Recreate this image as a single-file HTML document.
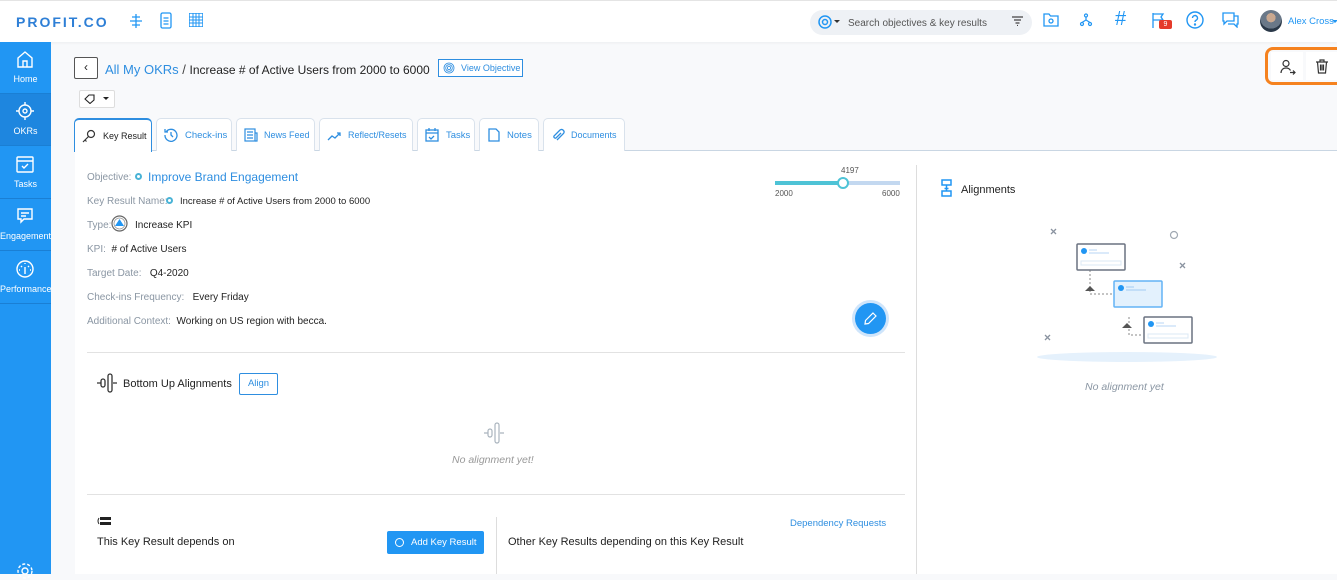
<!DOCTYPE html>
<html><head><meta charset="utf-8"><style>
*{box-sizing:border-box;margin:0;padding:0}
body{width:1337px;height:574px;overflow:hidden;background:#f8f9fb;font-family:"Liberation Sans",sans-serif;font-size:12px;color:#222;position:relative}
.a{position:absolute}
.hdr{left:0;top:0;width:1337px;height:42px;background:#fff;border-top:1px solid #e4e4e4;box-shadow:0 1px 3px rgba(0,0,0,.05)}
.side{left:0;top:42px;width:51px;height:532px;background:#2196f3}
.si{position:absolute;left:0;width:51px;height:52px;border-bottom:1px solid #1a7fd4;color:#fff;font-size:9px;text-align:center}
.si span{position:absolute;left:0;right:0;bottom:9px}
.si svg{position:absolute;left:16px;top:8px}
.tab{position:absolute;top:118px;height:33px;background:#fff;border:1px solid #d9e2ec;border-bottom:none;border-radius:5px 5px 0 0;color:#2e8ee0;font-size:9.5px;line-height:33px;padding-left:26px;white-space:nowrap;overflow:hidden}
.tab svg{position:absolute;left:7px;top:9px}
.lbl{color:#8a96a3;font-size:10px}
.val{color:#222;font-size:10px}
</style></head><body>
<div class="a hdr"></div>
<div class="a" style="left:16px;top:14px;font-weight:bold;font-size:14px;letter-spacing:2px;color:#2e7fd6">PROFIT.CO</div>
<svg class="a" style="left:129px;top:13px" width="14" height="16" viewBox="0 0 14 16" fill="none" stroke="#2196f3" stroke-width="1.3"><path d="M7 1v14M3 4h8M1 8h12M3 12h8"/></svg>
<svg class="a" style="left:160px;top:12px" width="12" height="17" viewBox="0 0 12 17" fill="none" stroke="#2196f3" stroke-width="1.3"><rect x="1" y="1" width="10" height="15" rx="1.5"/><path d="M3.5 6h5M3.5 9h5M3.5 12h5"/></svg>
<svg class="a" style="left:189px;top:13px" width="14" height="14" viewBox="0 0 14 14" fill="#2196f3"><path d="M0 0h14v14H0z" fill="none" stroke="#2196f3" stroke-width="1.5"/><path d="M4 0v14M7 0v14M10 0v14M0 4h14M0 7h14M0 10h14" stroke="#2196f3" stroke-width="1"/></svg>
<div class="a" style="left:810px;top:10px;width:222px;height:25px;background:#eef1f5;border-radius:13px"></div>
<svg class="a" style="left:818px;top:15px" width="14" height="14" viewBox="0 0 14 14" fill="none" stroke="#2196f3" stroke-width="1.5"><circle cx="7" cy="7" r="6"/><circle cx="7" cy="7" r="2.5"/></svg>
<div class="a" style="left:834px;top:20px;border:3px solid transparent;border-top:3px solid #333"></div>
<div class="a" style="left:848px;top:18px;font-size:10px;color:#555">Search objectives &amp; key results</div>
<svg class="a" style="left:1012px;top:16px" width="11" height="10" viewBox="0 0 11 10" stroke="#444" stroke-width="1.2"><path d="M0 1h11M2 4h7M3.5 7h4M5 9.5h1"/></svg>
<svg class="a" style="left:1043px;top:12px" width="16" height="15" viewBox="0 0 16 15" fill="none" stroke="#2196f3" stroke-width="1.3"><path d="M1 2h5l1.5 2H15v10H1z"/><circle cx="8" cy="9" r="2"/></svg>
<svg class="a" style="left:1079px;top:13px" width="14" height="14" viewBox="0 0 14 14" fill="none" stroke="#2196f3" stroke-width="1.2"><circle cx="7" cy="2.5" r="1.5"/><circle cx="3" cy="11" r="1.5"/><circle cx="11" cy="11" r="1.5"/><path d="M7 4v3M3 9.5L7 7l4 2.5"/></svg>
<div class="a" style="left:1115px;top:8px;color:#2196f3;font-size:20px">#</div>
<svg class="a" style="left:1151px;top:12px" width="16" height="16" viewBox="0 0 16 16" fill="none" stroke="#2196f3" stroke-width="1.3"><path d="M2 1v15M2 2h10l-2 3 2 3H2"/></svg>
<div class="a" style="left:1159px;top:20px;width:13px;height:9px;background:#e53a2a;border-radius:2px;color:#fff;font-size:7px;text-align:center;line-height:9px">9</div>
<svg class="a" style="left:1186px;top:11px" width="18" height="18" viewBox="0 0 18 18" fill="none" stroke="#2196f3" stroke-width="1.4"><circle cx="9" cy="9" r="8"/><path d="M6.5 7a2.5 2.5 0 1 1 3.5 2.3c-.8.4-1 .9-1 1.7"/><circle cx="9" cy="13.5" r=".5" fill="#2196f3"/></svg>
<svg class="a" style="left:1222px;top:12px" width="17" height="16" viewBox="0 0 17 16" fill="none" stroke="#2196f3" stroke-width="1.3"><path d="M1 1h11v8H5l-3 3V9H1zM12 4h4v8h-1v3l-3-3H6"/></svg>
<div class="a" style="left:1260px;top:10px;width:22px;height:22px;border-radius:50%;background:radial-gradient(circle at 50% 35%,#c9a890 0 25%,#6a7888 26% 60%,#2a3848 61%)"></div>
<div class="a" style="left:1288px;top:16px;font-size:9.5px;color:#2196f3">Alex Cross</div>
<div class="a" style="left:1332px;top:20px;border:3px solid transparent;border-top:3px solid #2196f3"></div>

<div class="a side"></div>
<div class="si" style="top:42px"><svg width="18" height="18" viewBox="0 0 18 18" fill="none" stroke="#fff" stroke-width="1.4"><path d="M2 8L9 2l7 6v9H2z"/><path d="M7 17v-6h4v6"/></svg><span>Home</span></div>
<div class="si" style="top:94px;background:#1e86df"><svg width="18" height="18" viewBox="0 0 18 18" fill="none" stroke="#fff" stroke-width="1.4"><circle cx="9" cy="9" r="6"/><circle cx="9" cy="9" r="2"/><path d="M9 0v3M9 15v3M0 9h3M15 9h3"/></svg><span>OKRs</span></div>
<div class="si" style="top:147px"><svg width="18" height="18" viewBox="0 0 18 18" fill="none" stroke="#fff" stroke-width="1.4"><rect x="1" y="2" width="16" height="15" rx="1"/><path d="M1 6h16M6 11l2 2 4-4"/></svg><span>Tasks</span></div>
<div class="si" style="top:199px"><svg width="18" height="18" viewBox="0 0 18 18" fill="none" stroke="#fff" stroke-width="1.4"><path d="M2 2h14v10H8l-3 3v-3H2z"/><path d="M5 6h8M5 9h5"/></svg><span>Engagement</span></div>
<div class="si" style="top:252px"><svg width="18" height="18" viewBox="0 0 18 18" fill="none" stroke="#fff" stroke-width="1.4"><circle cx="9" cy="9" r="8"/><path d="M9 14V7M5 6l1 1M13 6l-1 1M9 3v1M3 10h1M14 10h1"/></svg><span>Performance</span></div>
<svg class="a" style="left:16px;top:562px" width="18" height="18" viewBox="0 0 18 18" fill="none" stroke="#fff" stroke-width="1.4"><circle cx="9" cy="9" r="3"/><circle cx="9" cy="9" r="7" stroke-dasharray="3 2"/></svg>

<div class="a" style="left:74px;top:57px;width:24px;height:22px;border:1px solid #555;border-radius:2px;background:#fff;text-align:center;line-height:19px;font-size:12px">‹</div>
<div class="a" style="left:105px;top:62px;font-size:13px;color:#2e8ee0;white-space:nowrap">All My OKRs <span style="color:#444">/</span> <span style="color:#222;font-size:12px">Increase # of Active Users from 2000 to 6000</span></div>
<div class="a" style="left:438px;top:59px;width:85px;height:18px;border:1px solid #2e8ee0;background:#fff;color:#2e8ee0;font-size:9px;line-height:16px;padding-left:22px">View Objective</div>
<svg class="a" style="left:443px;top:62px" width="12" height="12" viewBox="0 0 12 12" fill="none" stroke="#2e8ee0" stroke-width=".8"><circle cx="6" cy="6" r="5"/><circle cx="6" cy="6" r="3.3"/><circle cx="6" cy="6" r="1.6"/></svg>
<div class="a" style="left:79px;top:90px;width:36px;height:18px;border:1px solid #ddd;border-radius:2px;background:#fff"></div>
<svg class="a" style="left:84px;top:94px" width="11" height="10" viewBox="0 0 11 10" fill="none" stroke="#222" stroke-width="1.1"><path d="M1 5l4-4h5v5l-4 3.5z"/></svg>
<div class="a" style="left:103px;top:97px;border:3px solid transparent;border-top:3px solid #222"></div>

<div class="a" style="left:1265px;top:47px;width:80px;height:38px;border:3px solid #f5821f;border-radius:8px"></div>
<div class="a" style="left:1271px;top:52px;width:32px;height:28px;background:#fff"></div>
<div class="a" style="left:1306px;top:52px;width:31px;height:28px;background:#fff"></div>
<svg class="a" style="left:1280px;top:59px" width="16" height="16" viewBox="0 0 16 16" fill="none" stroke="#333" stroke-width="1.2"><circle cx="6" cy="4.5" r="3"/><path d="M1 14c0-3 2-5 5-5s4 1.5 4.5 2.5M10 13.5h5M13 11.5l2 2-2 2"/></svg>
<svg class="a" style="left:1316px;top:59px" width="12" height="15" viewBox="0 0 12 15" fill="none" stroke="#333" stroke-width="1.2"><path d="M0 3h12M4 3V1h4v2M1.5 3l1 11h7l1-11M4.5 5.5v6M6 5.5v6M7.5 5.5v6"/></svg>

<div class="a" style="left:75px;top:150px;width:1262px;height:424px;background:#fff;border-top:1px solid #c9d6e3"></div>
<div class="tab" style="left:74px;width:78px;color:#222;border-color:#2e8ee0;border-top:2px solid #2e8ee0;height:34px;padding-left:28px;font-size:9px"><svg width="14" height="14" viewBox="0 0 14 14" fill="none" stroke="#333" stroke-width="1.2"><circle cx="9" cy="5" r="3.5"/><path d="M6.5 7.5L1 13M3 11l1.5 1.5"/></svg>Key Result</div>
<div class="tab" style="left:156px;width:76px;padding-left:28px"><svg width="14" height="14" viewBox="0 0 14 14" fill="none" stroke="#2e8ee0" stroke-width="1.3"><path d="M2 4a6 6 0 1 1-1 3M1 1v3h3M7 4v3l2 2"/></svg>Check-ins</div>
<div class="tab" style="left:236px;width:79px;padding-left:27px;font-size:9px"><svg width="14" height="14" viewBox="0 0 14 14" fill="none" stroke="#2e8ee0" stroke-width="1.2"><rect x="1" y="1" width="10" height="12"/><path d="M11 5h2v8h-2M3 4h6M3 7h6M3 10h6"/></svg>News Feed</div>
<div class="tab" style="left:319px;width:94px;padding-left:28px;font-size:9px"><svg width="14" height="14" viewBox="0 0 14 14" fill="none" stroke="#2e8ee0" stroke-width="1.3"><path d="M1 12l4-4 3 2 5-5M10 5h3v3"/></svg>Reflect/Resets</div>
<div class="tab" style="left:417px;width:58px;padding-left:28px"><svg width="14" height="14" viewBox="0 0 14 14" fill="none" stroke="#2e8ee0" stroke-width="1.3"><rect x="1" y="2" width="12" height="11"/><path d="M1 5h12M4 9l2 2 3-3M4 0v3M10 0v3"/></svg>Tasks</div>
<div class="tab" style="left:479px;width:60px;padding-left:27px"><svg width="14" height="14" viewBox="0 0 14 14" fill="none" stroke="#2e8ee0" stroke-width="1.3"><path d="M2 1h7l3 3v9H2z"/></svg>Notes</div>
<div class="tab" style="left:543px;width:82px;padding-left:27px;font-size:9px"><svg width="14" height="14" viewBox="0 0 14 14" fill="none" stroke="#2e8ee0" stroke-width="1.3"><path d="M10 5L5 10a1.5 1.5 0 0 1-2-2l6-6a2.5 2.5 0 0 1 3.5 3.5L6 12"/></svg>Documents</div>

<div class="a lbl" style="left:87px;top:172px">Objective:</div>
<div class="a" style="left:135px;top:173px;width:7px;height:7px;border:2px solid #4ab3d6;border-radius:50%"></div>
<div class="a" style="left:148px;top:170px;font-size:12px;color:#2e8ee0">Improve Brand Engagement</div>
<div class="a lbl" style="left:87px;top:196px">Key Result Name:</div>
<div class="a" style="left:166px;top:197px;width:7px;height:7px;border:2px solid #4ab3d6;border-radius:50%"></div>
<div class="a val" style="left:180px;top:196px;font-size:9.5px">Increase # of Active Users from 2000 to 6000</div>
<div class="a lbl" style="left:87px;top:220px">Type:</div>
<svg class="a" style="left:111px;top:215px" width="17" height="17" viewBox="0 0 17 17"><circle cx="8.5" cy="8.5" r="7.5" fill="#fff" stroke="#666" stroke-width="1.2"/><circle cx="8.5" cy="8.5" r="5.5" fill="none" stroke="#999" stroke-width=".8"/><path d="M8.5 4L13 11H4z" fill="#2196f3"/></svg>
<div class="a val" style="left:135px;top:220px">Increase KPI</div>
<div class="a lbl" style="left:87px;top:244px">KPI: <span class="val">&nbsp;# of Active Users</span></div>
<div class="a lbl" style="left:87px;top:268px">Target Date: <span class="val">&nbsp;&nbsp;Q4-2020</span></div>
<div class="a lbl" style="left:87px;top:292px">Check-ins Frequency: <span class="val">&nbsp;&nbsp;Every Friday</span></div>
<div class="a lbl" style="left:87px;top:316px">Additional Context: <span class="val">&nbsp;Working on US region with becca.</span></div>

<div class="a" style="left:841px;top:166px;font-size:8px;color:#555">4197</div>
<div class="a" style="left:775px;top:181px;width:68px;height:4px;background:#4ec3d6"></div>
<div class="a" style="left:843px;top:181px;width:57px;height:4px;background:#c3d8f0"></div>
<div class="a" style="left:837px;top:177px;width:12px;height:12px;border:2.5px solid #4ec3d6;border-radius:50%;background:#fff"></div>
<div class="a" style="left:775px;top:189px;font-size:8px;color:#555">2000</div>
<div class="a" style="left:882px;top:189px;font-size:8px;color:#555">6000</div>
<div class="a" style="left:852px;top:300px;width:37px;height:37px;border-radius:50%;background:#cfe5fb"></div>
<div class="a" style="left:855px;top:303px;width:31px;height:31px;border-radius:50%;background:#2196f3"></div>
<svg class="a" style="left:864px;top:312px" width="13" height="13" viewBox="0 0 13 13" fill="none" stroke="#fff" stroke-width="1.2"><path d="M9 1l3 3-7.5 7.5L1 12l.5-3.5z"/></svg>

<div class="a" style="left:916px;top:165px;width:1px;height:409px;background:#ddd"></div>
<div class="a" style="left:87px;top:352px;width:818px;height:1px;background:#e2e2e2"></div>
<div class="a" style="left:87px;top:494px;width:818px;height:1px;background:#e2e2e2"></div>
<div class="a" style="left:496px;top:517px;width:1px;height:57px;background:#ddd"></div>

<svg class="a" style="left:96px;top:373px" width="22" height="20" viewBox="0 0 22 20" fill="none" stroke="#333" stroke-width="1.3"><path d="M1 10h4M17 10h4"/><rect x="5" y="6" width="4" height="8" rx="2"/><rect x="12" y="1" width="4" height="18" rx="2"/></svg>
<div class="a" style="left:123px;top:378px;font-size:11px">Bottom Up Alignments</div>
<div class="a" style="left:239px;top:373px;width:39px;height:22px;border:1px solid #2e8ee0;border-radius:2px;color:#2e8ee0;font-size:9.5px;text-align:center;line-height:20px">Align</div>
<svg class="a" style="left:483px;top:422px" width="22" height="22" viewBox="0 0 22 22" fill="none" stroke="#aab4be" stroke-width="1.2"><path d="M1 11h4M17 11h4"/><rect x="5" y="7" width="4" height="8" rx="2"/><rect x="12" y="1" width="4" height="20" rx="2"/></svg>
<div class="a" style="left:452px;top:454px;font-size:10.5px;color:#999;font-style:italic">No alignment yet!</div>

<svg class="a" style="left:96px;top:516px" width="16" height="10" viewBox="0 0 16 10"><path d="M4 1h11v3H4zM4 6h11v3H4z" fill="#222"/><path d="M3 2Q1 5 3 8" stroke="#222" fill="none"/></svg>
<div class="a" style="left:97px;top:536px;font-size:11px">This Key Result depends on</div>
<div class="a" style="left:387px;top:531px;width:97px;height:23px;background:#2196f3;border-radius:2px;color:#fff;font-size:9.5px;line-height:23px;padding-left:24px">Add Key Result</div>
<div class="a" style="left:395px;top:538px;width:9px;height:9px;border:1.2px solid #fff;border-radius:50%"></div>
<div class="a" style="left:790px;top:518px;font-size:9.5px;color:#2e8ee0">Dependency Requests</div>
<div class="a" style="left:508px;top:536px;font-size:11px">Other Key Results depending on this Key Result</div>

<svg class="a" style="left:941px;top:179px" width="11" height="18" viewBox="0 0 11 18" fill="none" stroke="#2196f3" stroke-width="1.5"><rect x="1" y="1" width="9" height="5"/><rect x="1" y="12" width="9" height="5"/><path d="M5.5 6v6M3.5 9.5h4"/></svg>
<div class="a" style="left:961px;top:184px;font-size:11px">Alignments</div>
<svg class="a" style="left:1030px;top:220px" width="200" height="150" viewBox="0 0 200 150" fill="none">
<ellipse cx="97" cy="137" rx="90" ry="5" fill="#e5f1fc"/>
<path d="M21 9l5 5M26 9l-5 5M150 43l5 5M155 43l-5 5M15 115l5 5M20 115l-5 5" stroke="#8a93a0" stroke-width="1.3"/>
<circle cx="144" cy="15" r="3.5" stroke="#a0a8b2" stroke-width="1.2"/>
<path d="M60 50v24h24M99 97v18h14" stroke="#888" stroke-dasharray="2 2"/>
<path d="M55 71l5-5 5 5zM92 108l5-5 5 5z" fill="#555"/>
<rect x="47" y="24" width="48" height="26" rx="1" fill="#fff" stroke="#6a7280" stroke-width="1.5"/>
<circle cx="54" cy="31" r="3" fill="#2196f3"/><path d="M59 30h8M59 33h20" stroke="#cfe3f8" stroke-width="1.5"/><rect x="51" y="41" width="40" height="4" stroke="#dbe8f5"/>
<rect x="84" y="61" width="48" height="26" rx="1" fill="#e3f1fd" stroke="#63b3f5" stroke-width="1.5"/>
<circle cx="91" cy="68" r="3" fill="#2196f3"/><path d="M96 67h8M96 70h20" stroke="#b8d8f6" stroke-width="1.5"/>
<rect x="114" y="97" width="48" height="26" rx="1" fill="#fff" stroke="#6a7280" stroke-width="1.5"/>
<circle cx="121" cy="104" r="3" fill="#2196f3"/><path d="M126 103h8M126 106h20" stroke="#cfe3f8" stroke-width="1.5"/><rect x="118" y="114" width="40" height="4" stroke="#dbe8f5"/>
</svg>
<div class="a" style="left:1085px;top:381px;font-size:10.5px;color:#8a96a3;font-style:italic">No alignment yet</div>
</body></html>
